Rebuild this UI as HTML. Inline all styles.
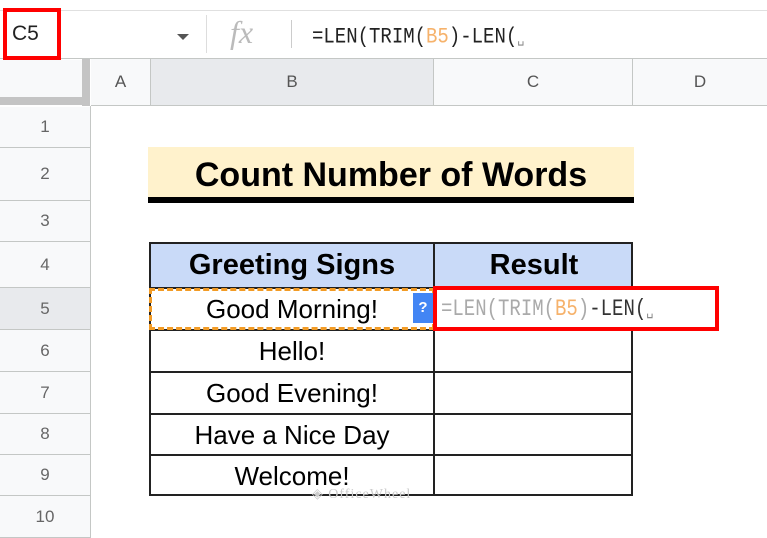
<!DOCTYPE html>
<html><head><style>
*{margin:0;padding:0;box-sizing:border-box}
body{width:767px;height:538px;overflow:hidden;background:#fff;font-family:"Liberation Sans",Arial,sans-serif;position:relative}
.a{position:absolute}
.rh{position:absolute;left:0;width:90px;background:#f8f9fa;border-bottom:1px solid #c4c7c5;color:#666;font-size:17px;display:flex;align-items:center;justify-content:center}
.ch{position:absolute;top:59px;height:47px;background:#f8f9fa;border-right:1px solid #c4c7c5;color:#555;font-size:17px;display:flex;align-items:center;justify-content:center;border-bottom:1px solid #c4c7c5}
.cell{position:absolute;display:flex;align-items:center;justify-content:center;font-size:26px;color:#000}
.mono{font-family:"Liberation Mono",monospace}
</style></head><body>
<div class="a" style="left:0;top:10px;width:767px;height:1px;background:#e0e0e0"></div>
<div class="a" style="left:0;top:58px;width:767px;height:1px;background:#c4c7c5"></div>
<div class="a" style="left:3px;top:8px;width:58px;height:52px;border:4px solid #ff0000"></div>
<div class="a" style="left:12px;top:22px;font-size:21px;color:#222">C5</div>
<div class="a" style="left:177px;top:34px;width:0;height:0;border-left:6px solid transparent;border-right:6px solid transparent;border-top:6px solid #555"></div>
<div class="a" style="left:206px;top:15px;width:1px;height:38px;background:#ddd"></div>
<div class="a" style="left:230px;top:14px;font-size:32px;font-style:italic;color:#bbb;font-family:'Liberation Serif',serif">fx</div>
<div class="a" style="left:291px;top:20px;width:1px;height:28px;background:#ccc"></div>
<div class="a mono" style="left:312px;top:24px;font-size:19px;color:#222;transform:scaleY(1.15);transform-origin:top left">=LEN(TRIM(<span style="color:#f6b26b">B5</span>)-LEN(<span style="font-size:12px;color:#888">␣</span></div>
<div class="a" style="left:0;top:60px;width:90px;height:46px;background:#fff"></div>
<div class="a" style="left:0;top:60px;width:82px;height:37px;background:#f8f9fa"></div>
<div class="a" style="left:82px;top:59px;width:8px;height:47px;background:#c4c4c4"></div>
<div class="a" style="left:0;top:97px;width:82px;height:8px;background:#c4c4c4"></div>
<div class="ch" style="left:91px;width:60px">A</div>
<div class="ch" style="left:151px;width:283px;background:#e8eaed">B</div>
<div class="ch" style="left:434px;width:199px">C</div>
<div class="ch" style="left:633px;width:134px;border-right:none">D</div>
<div class="a" style="left:90px;top:106px;width:1px;height:432px;background:#c4c7c5"></div>
<div class="rh" style="top:107px;height:41px">1</div>
<div class="rh" style="top:148px;height:53px">2</div>
<div class="rh" style="top:201px;height:41px">3</div>
<div class="rh" style="top:242px;height:46px">4</div>
<div class="rh" style="top:288px;height:42px;background:#e8eaed">5</div>
<div class="rh" style="top:330px;height:42px">6</div>
<div class="rh" style="top:372px;height:42px">7</div>
<div class="rh" style="top:414px;height:41px">8</div>
<div class="rh" style="top:455px;height:41px">9</div>
<div class="rh" style="top:496px;height:42px">10</div>
<div class="a" style="left:148px;top:147px;width:486px;height:51px;background:#fff2cc"></div>
<div class="a" style="left:148px;top:197px;width:486px;height:6px;background:#000"></div>
<div class="cell" style="left:148px;top:150px;width:486px;height:51px;font-size:34px;font-weight:bold">Count Number of Words</div>
<div class="a" style="left:149px;top:242px;width:484px;height:254px;border:2px solid #222"></div>
<div class="a" style="left:151px;top:244px;width:480px;height:43px;background:#c9daf8"></div>
<div class="a" style="left:433px;top:242px;width:2px;height:254px;background:#222"></div>
<div class="a" style="left:149px;top:287px;width:484px;height:2px;background:#222"></div>
<div class="a" style="left:149px;top:329px;width:484px;height:2px;background:#222"></div>
<div class="a" style="left:149px;top:371px;width:484px;height:2px;background:#222"></div>
<div class="a" style="left:149px;top:413px;width:484px;height:2px;background:#222"></div>
<div class="a" style="left:149px;top:454px;width:484px;height:2px;background:#222"></div>
<div class="cell" style="left:151px;top:244px;width:282px;height:43px;font-weight:bold;font-size:29px">Greeting Signs</div>
<div class="cell" style="left:435px;top:244px;width:198px;height:43px;font-weight:bold;font-size:29px">Result</div>
<div class="a" style="left:149px;top:288px;width:286px;height:42px;border:3px dashed #f29b25"></div>
<div class="cell" style="left:151px;top:289px;width:282px;height:41px">Good Morning!</div>
<div class="cell" style="left:151px;top:331px;width:282px;height:40px">Hello!</div>
<div class="cell" style="left:151px;top:373px;width:282px;height:40px">Good Evening!</div>
<div class="cell" style="left:151px;top:415px;width:282px;height:40px">Have a Nice Day</div>
<div class="cell" style="left:151px;top:456px;width:282px;height:40px">Welcome!</div>
<div class="a" style="left:413px;top:293px;width:20px;height:30px;background:#4285f4;color:#fff;font-weight:bold;font-size:15px;text-align:center;line-height:30px">?</div>
<div class="a" style="left:433px;top:286px;width:286px;height:45px;border:4px solid #ff0000;background:#fff"></div>
<div class="a mono" style="left:441px;top:296px;font-size:19px;color:#aaa;white-space:nowrap;transform:scaleY(1.2);transform-origin:top left">=LEN(TRIM(<span style="color:#f6b26b">B5</span>)<span style="color:#333">-LEN(</span><span style="font-size:12px;color:#888">␣</span></div>
<div class="a" style="left:312px;top:486px;font-size:14px;color:#ccc;font-family:'Liberation Serif',serif;letter-spacing:1px">◈ OfficeWheel</div>
</body></html>
